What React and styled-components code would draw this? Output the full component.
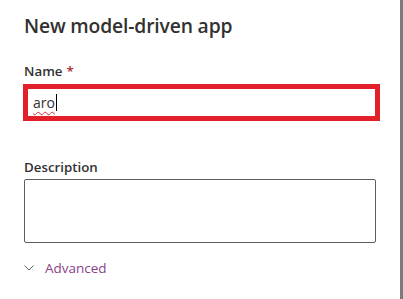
import React from 'react';
import styled, { createGlobalStyle } from 'styled-components';

const GlobalStyle = createGlobalStyle`
    html, body {
        margin: 0;
        padding: 0;
        background: #ffffff;
    }
    body {
        font-family: "Open Sans", "Noto Sans", "Liberation Sans", sans-serif;
        color: #323130;
    }
`;

const Frame = styled.div`
    display: flex;
    width: 403px;
    height: 299px;
    overflow: hidden;
`;

const Panel = styled.div`
    flex: 1;
    display: flex;
    flex-direction: column;
    padding: 12px 20px 0 23px;
`;

const Scrollbar = styled.div`
    width: 3px;
    background: #7b7b7b;
`;

const Title = styled.h2`
    margin: 0 0 0 1px;
    font-size: 19.3px;
    line-height: 28px;
    font-weight: 600;
    color: #323130;
    letter-spacing: -0.15px;
`;

const Label = styled.label`
    display: block;
    margin: ${props => props.top}px 0 0 1px;
    font-size: 13.3px;
    line-height: 20px;
    font-weight: 600;
    color: #323130;
`;

const Required = styled.span`
    color: #a4262c;
    margin-left: 4px;
`;

const NameInput = styled.div`
    display: flex;
    align-items: center;
    margin-top: 3px;
    height: 27px;
    border: 5px solid #e3202a;
    padding: 0 5px;
    font-size: 14px;
    color: #323130;
`;

const Typed = styled.span`
    text-decoration: underline wavy #d13438;
    text-decoration-thickness: 1px;
    text-underline-offset: 3px;
`;

const Caret = styled.span`
    display: inline-block;
    width: 1px;
    height: 17px;
    background: #000;
    margin-left: 1px;
`;

const TextArea = styled.div`
    margin: 2px 4px 0 1px;
    height: 62px;
    border: 1px solid #605e5c;
    border-radius: 2px;
`;

const Toggle = styled.div`
    display: flex;
    align-items: center;
    gap: 11px;
    margin: 15px 0 0 1px;
    font-size: 13.5px;
    line-height: 20px;
    color: #8a3f8a;
`;

const Chevron = () => (
    <svg width="10" height="6" viewBox="0 0 10 6">
        <path d="M0.5 0.5 L5 5 L9.5 0.5" fill="none" stroke="#605e5c" strokeWidth="1" />
    </svg>
);

const App = () => (
    <>
        <GlobalStyle />
        <Frame>
            <Panel>
                <Title>New model-driven app</Title>
                <Label top={21}>
                    Name<Required>*</Required>
                </Label>
                <NameInput>
                    <Typed>aro</Typed>
                    <Caret />
                </NameInput>
                <Label top={36}>Description</Label>
                <TextArea />
                <Toggle>
                    <Chevron />
                    Advanced
                </Toggle>
            </Panel>
            <Scrollbar />
        </Frame>
    </>
);

export default App;
